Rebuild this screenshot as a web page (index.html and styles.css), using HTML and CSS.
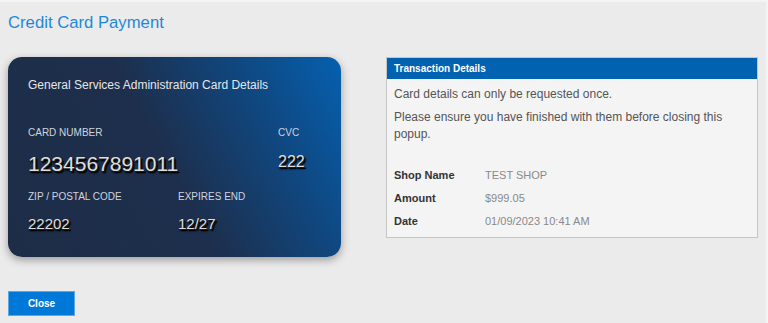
FILE: index.html
```html
<!DOCTYPE html>
<html>
<head>
<meta charset="utf-8">
<link rel="stylesheet" href="styles.css">
</head>
<body>
<div class="page">
  <h1 class="title">Credit Card Payment</h1>
  <div class="content">
    <div class="card">
      <div class="card-title">General Services Administration Card Details</div>
      <div class="card-row row-top">
        <div class="field">
          <div class="label">CARD NUMBER</div>
          <div class="value big">1234567891011</div>
        </div>
        <div class="field">
          <div class="label">CVC</div>
          <div class="value mid">222</div>
        </div>
      </div>
      <div class="card-row row-bottom">
        <div class="field">
          <div class="label">ZIP / POSTAL CODE</div>
          <div class="value small">22202</div>
        </div>
        <div class="field">
          <div class="label">EXPIRES END</div>
          <div class="value small">12/27</div>
        </div>
      </div>
    </div>
    <div class="panel">
      <div class="panel-head">Transaction Details</div>
      <div class="panel-body">
        <p class="note">Card details can only be requested once.</p>
        <p class="note second">Please ensure you have finished with them before closing this popup.</p>
        <div class="details">
          <div class="dt">Shop Name</div><div class="dd">TEST SHOP</div>
          <div class="dt">Amount</div><div class="dd">$999.05</div>
          <div class="dt">Date</div><div class="dd">01/09/2023 10:41 AM</div>
        </div>
      </div>
    </div>
  </div>
  <button class="close">Close</button>
</div>
</body>
</html>
```
FILE: styles.css
```css
html, body {
  margin: 0;
  padding: 0;
}
body {
  background: #f4f4f4;
  font-family: "Liberation Sans", Arial, sans-serif;
}
.page {
  margin-top: 2px;
  margin-right: 2px;
  height: 321px;
  background: #ebebeb;
  padding: 10px 8px 0 8px;
  box-sizing: border-box;
}
.title {
  margin: 0;
  font-size: 16.7px;
  line-height: 21px;
  font-weight: normal;
  color: #1d88da;
}
.content {
  display: flex;
  align-items: flex-start;
  margin-top: 24px;
}
.card {
  width: 333px;
  height: 200px;
  box-sizing: border-box;
  border-radius: 14px;
  padding: 20px 20px 0 20px;
  background: linear-gradient(62deg, #1e2d47 0%, #1d2f4d 48%, #10477f 75%, #0560b0 100%);
  box-shadow: 0 3px 8px rgba(0, 0, 0, 0.35);
}
.card-title {
  font-size: 12px;
  line-height: 16px;
  color: #e4e6ea;
}
.card-row {
  display: grid;
}
.row-top {
  grid-template-columns: 250px auto;
  margin-top: 34px;
}
.row-bottom {
  grid-template-columns: 150px auto;
  margin-top: 15px;
}
.label {
  font-size: 10px;
  line-height: 12px;
  color: #cfd5de;
}
.value {
  color: #dedede;
  text-shadow: 1px 1px 0 #1a1a1a, 2px 2px 1px #000, 1px 2px 2px #000;
}
.value.big {
  font-size: 21px;
  line-height: 24px;
  margin-top: 13px;
}
.value.mid {
  font-size: 16px;
  line-height: 20px;
  margin-top: 13px;
}
.value.small {
  font-size: 15px;
  line-height: 18px;
  margin-top: 12px;
}
.panel {
  margin-left: 45px;
  width: 372px;
  box-sizing: border-box;
  border: 1px solid #c6c6c6;
  background: #f4f4f4;
}
.panel-head {
  background: #0062b1;
  color: #ffffff;
  font-size: 10px;
  font-weight: bold;
  line-height: 21px;
  padding-left: 7px;
}
.panel-body {
  padding: 7px 7px 7px 7px;
}
.note {
  margin: 0;
  font-size: 12px;
  line-height: 17px;
  color: #555555;
}
.note.second {
  margin-top: 6px;
}
.details {
  display: grid;
  grid-template-columns: 91px auto;
  row-gap: 6px;
  margin-top: 24px;
  font-size: 11px;
  line-height: 17px;
}
.dt {
  font-weight: bold;
  color: #333333;
}
.dd {
  color: #8a8a8a;
}
.close {
  display: block;
  margin-top: 34px;
  width: 67px;
  height: 25px;
  padding: 0;
  background: #0078d7;
  border: 1px solid #5aa9e6;
  color: #ffffff;
  font-family: "Liberation Sans", Arial, sans-serif;
  font-size: 10px;
  font-weight: bold;
}
```
